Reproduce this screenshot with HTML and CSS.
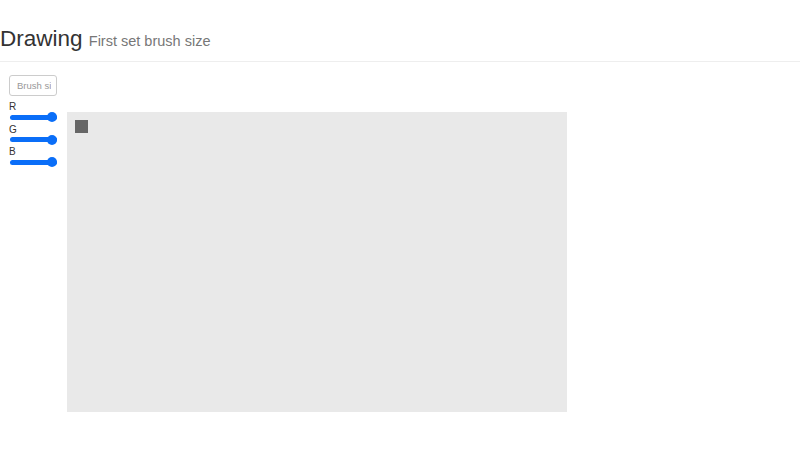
FILE: index.html
```html
<!DOCTYPE html>
<html lang="en">
<head>
    <meta charset="UTF-8">
    <meta name="viewport" content="width=device-width, initial-scale=1.0">
    <title>Drawing</title>
    <link rel="stylesheet" href="styles.css">
</head>
<body>
    <div class="page-header">
        <h1>Drawing <small>First set brush size</small></h1>
    </div>
    <div class="workspace">
        <div class="controls">
            <input type="text" class="brush-size" placeholder="Brush size">
            <label>R</label>
            <input type="range" min="0" max="255" value="255">
            <label>G</label>
            <input type="range" min="0" max="255" value="255">
            <label>B</label>
            <input type="range" min="0" max="255" value="255">
        </div>
        <div class="board">
            <div class="brush"></div>
        </div>
    </div>
</body>
</html>
```

FILE: styles.css
```css
body{
    margin: 0;
    font-family: "Liberation Sans", Arial, sans-serif;
    color: #333;
    background-color: #fff;
}
.page-header{
    padding-top: 24px;
    padding-bottom: 7px;
    border-bottom: 1px solid #eee;
}
h1{
    margin: 0;
    font-size: 22.5px;
    font-weight: normal;
    line-height: 30px;
    height: 30px;
}
h1 small{
    font-size: 14.5px;
    line-height: 1;
    color: #777;
}
.workspace{
    display: flex;
    align-items: flex-start;
    padding: 13px 0 0 9px;
}
.controls{
    display: flex;
    flex-direction: column;
    width: 49px;
}
.brush-size{
    box-sizing: border-box;
    width: 48px;
    height: 21px;
    margin: 0 0 6px 0;
    padding: 0 5px 0 7px;
    border: 1px solid #ccc;
    border-radius: 3px;
    font-family: inherit;
    font-size: 9.5px;
    color: #555;
}
.brush-size::placeholder{
    color: #999;
}
label{
    font-size: 10px;
    line-height: 10px;
    height: 10px;
    color: #333;
}
input[type=range]{
    -webkit-appearance: none;
    appearance: none;
    width: 47px;
    height: 10px;
    margin: 0 0 2.5px 1px;
    background: transparent;
}
input[type=range]::-webkit-slider-runnable-track{
    height: 5px;
    border-radius: 3px;
    background: #0a6ef8;
}
input[type=range]::-webkit-slider-thumb{
    -webkit-appearance: none;
    width: 10px;
    height: 10px;
    margin-top: -2.5px;
    border-radius: 50%;
    background: #0a6ef8;
}
.board{
    width: 500px;
    height: 300px;
    margin: 37px 0 0 9px;
    background-color: #e9e9e9;
    padding: 8px;
    box-sizing: border-box;
}
.brush{
    width: 13px;
    height: 13px;
    background-color: #666;
}
```
